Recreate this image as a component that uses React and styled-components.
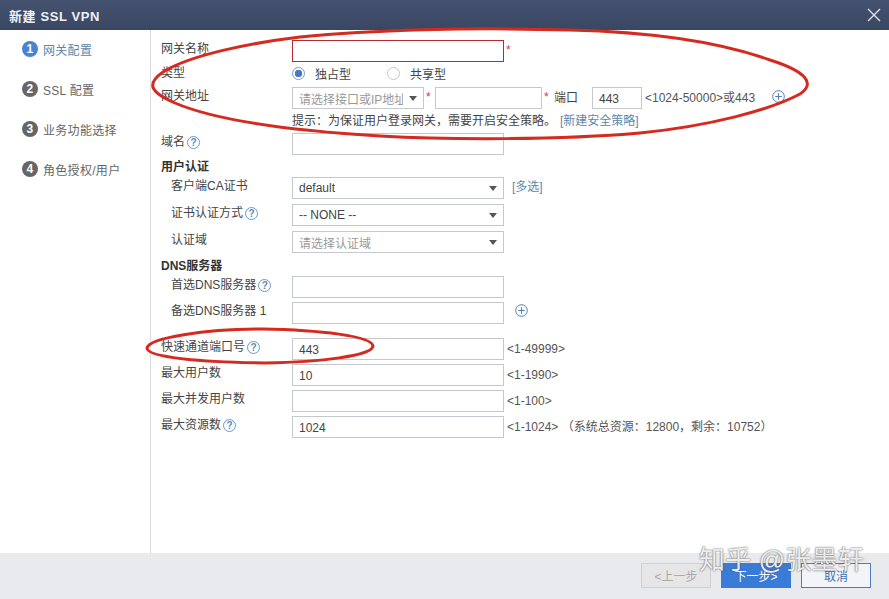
import React from "react";
import styled, { createGlobalStyle } from "styled-components";

const GlobalStyle = createGlobalStyle`
  html, body {
    margin: 0;
    padding: 0;
    background: #fff;
    overflow: hidden;
  }
  body {
    font-family: "Liberation Sans", "Noto Sans CJK SC", sans-serif;
    font-size: 12px;
    color: #444;
  }
`;

const Dialog = styled.div`
  position: relative;
  width: 889px;
  height: 599px;
  display: flex;
  flex-direction: column;
  overflow: hidden;
`;

const TitleBar = styled.header`
  height: 30px;
  flex: none;
  display: flex;
  align-items: center;
  justify-content: space-between;
  padding: 0 8px 0 9px;
  background: linear-gradient(#445270, #3a4763);
  color: #eef0f4;
  font-size: 13px;
  font-weight: bold;
  letter-spacing: 0.6px;
`;

const CloseIcon = styled.svg`
  width: 14px;
  height: 14px;
  display: block;
`;

const Body = styled.div`
  flex: 1;
  display: flex;
  min-height: 0;
`;

const Sidebar = styled.nav`
  width: 128px;
  flex: none;
  border-right: 1px solid #dcdcdc;
  padding-left: 22px;
`;

const Step = styled.div`
  height: 40px;
  box-sizing: border-box;
  padding-bottom: 2px;
  display: flex;
  align-items: center;
  gap: 5px;
  color: ${(p) => (p.$active ? "#5d87a6" : "#666")};
  letter-spacing: 0.3px;
`;

const StepNumber = styled.span`
  width: 16px;
  height: 16px;
  border-radius: 50%;
  background: ${(p) => (p.$active ? "#4a82d4" : "#666")};
  color: #fff;
  font-size: 12px;
  font-weight: bold;
  line-height: 16px;
  text-align: center;
  flex: none;
`;

const Form = styled.main`
  flex: 1;
  display: flex;
  flex-direction: column;
  padding: 10px 0 0 10px;
`;

const Row = styled.div`
  display: flex;
  align-items: flex-start;
  height: 22px;
  margin-top: ${(p) => p.$top || 0}px;
`;

const Label = styled.label`
  width: ${(p) => (p.$indent ? 121 : 131)}px;
  padding-left: ${(p) => (p.$indent ? 10 : 0)}px;
  margin-top: 1px;
  flex: none;
  display: flex;
  align-items: center;
  gap: 2px;
  line-height: 16px;
  color: #444;
  white-space: nowrap;
`;

const CenteredLabel = styled(Label)`
  margin-top: 0;
  line-height: 22px;
`;

const SectionTitle = styled.div`
  height: 22px;
  line-height: 24px;
  font-weight: bold;
  color: #333;
  margin-top: ${(p) => p.$top || 0}px;
`;

const Input = styled.input`
  width: ${(p) => p.$width || 212}px;
  height: 22px;
  box-sizing: border-box;
  flex: none;
  border: 1px solid ${(p) => (p.$error ? "#b32a30" : "#c6c9cc")};
  padding: 1px 6px 0;
  margin: 0;
  background: #fff;
  color: #444;
  font: 12px "Liberation Sans", "Noto Sans CJK SC", sans-serif;
  outline: none;
`;

const SelectBox = styled.div`
  width: ${(p) => p.$width || 212}px;
  height: 22px;
  box-sizing: border-box;
  flex: none;
  border: 1px solid #c6c9cc;
  padding: 0 6px;
  display: flex;
  align-items: center;
  justify-content: space-between;
  color: ${(p) => (p.$placeholder ? "#999" : "#444")};
  overflow: hidden;
  white-space: nowrap;
`;

const SelectText = styled.span`
  overflow: hidden;
  flex: 1;
`;

const Caret = styled.i`
  width: 0;
  height: 0;
  flex: none;
  margin-left: 6px;
  border-left: 4px solid transparent;
  border-right: 4px solid transparent;
  border-top: 5px solid #555;
`;

const Required = styled.span`
  color: #c8434a;
  width: 11px;
  flex: none;
  padding-left: 2px;
  box-sizing: border-box;
  line-height: 20px;
`;

const RadioGroup = styled.div`
  display: flex;
  align-items: center;
  height: 22px;
  gap: 36px;
`;

const RadioItem = styled.span`
  display: flex;
  align-items: center;
  gap: 10px;
  color: #444;
`;

const RadioDot = styled.i`
  width: 13px;
  height: 13px;
  box-sizing: border-box;
  border-radius: 50%;
  border: 1px solid ${(p) => (p.$checked ? "#7d9cc0" : "#c8c8c8")};
  background: ${(p) =>
    p.$checked ? "radial-gradient(circle, #4a78c4 0 3.5px, #fff 4px)" : "#fff"};
`;

const Hint = styled.div`
  line-height: 22px;
  color: #444;
  white-space: nowrap;
`;

const Link = styled.a`
  color: #5d87a6;
  margin-left: ${(p) => p.$left || 0}px;
`;

const Range = styled.span`
  color: #555;
  margin-left: 3px;
  line-height: 22px;
  white-space: nowrap;
`;

const PortLabel = styled.span`
  width: 38px;
  flex: none;
  margin-left: 1px;
  line-height: 22px;
  color: #444;
`;

const Help = styled.span`
  width: 13px;
  height: 13px;
  box-sizing: border-box;
  border-radius: 50%;
  border: 1px solid #6d97c4;
  color: #5d87b8;
  font-size: 10px;
  font-weight: bold;
  line-height: 11px;
  text-align: center;
  flex: none;
`;

const AddIcon = styled.svg`
  width: 13px;
  height: 13px;
  flex: none;
  margin-left: ${(p) => p.$left || 0}px;
  margin-top: ${(p) => p.$offset || 0}px;
`;

const Footer = styled.footer`
  height: 46px;
  flex: none;
  background: #e8eaee;
  display: flex;
  justify-content: flex-end;
  gap: 10px;
  padding: 10px 18px 0 0;
  box-sizing: border-box;
`;

const Button = styled.button`
  width: 70px;
  height: 25px;
  box-sizing: border-box;
  margin: 0;
  padding: 0;
  font: 12px "Liberation Sans", "Noto Sans CJK SC", sans-serif;
  border: 1px solid
    ${(p) =>
      p.$variant === "primary" ? "#3a7bd8" : p.$variant === "ghost" ? "#4a7fc4" : "#cfd0d2"};
  background: ${(p) => (p.$variant === "primary" ? "#3a7bd8" : p.$variant === "ghost" ? "#f2f4f8" : "#e6e6e6")};
  color: ${(p) => (p.$variant === "primary" ? "#fff" : p.$variant === "ghost" ? "#3f6fb4" : "#aaa")};
`;

const Annotations = styled.svg`
  position: absolute;
  left: 0;
  top: 0;
  width: 889px;
  height: 599px;
  pointer-events: none;
`;

const Watermark = styled.div`
  position: absolute;
  left: 699px;
  top: 544px;
  font-size: 26px;
  line-height: 32px;
  letter-spacing: 0.2px;
  white-space: nowrap;
  color: rgba(255, 255, 255, 0.9);
  text-shadow: 0 0 2px rgba(90, 90, 90, 0.85), 0 0 1px rgba(90, 90, 90, 0.7);
`;

const Plus = ({ left, offset }) => (
  <AddIcon viewBox="0 0 13 13" $left={left} $offset={offset}>
    <circle cx="6.5" cy="6.5" r="5.8" fill="none" stroke="#4f80bc" strokeWidth="1" />
    <path d="M6.5 3.2v6.6M3.2 6.5h6.6" stroke="#4f80bc" strokeWidth="1" />
  </AddIcon>
);

const steps = ["网关配置", "SSL 配置", "业务功能选择", "角色授权/用户"];

export default function App() {
  return (
    <Dialog>
      <GlobalStyle />
      <TitleBar>
        新建 SSL VPN
        <CloseIcon viewBox="0 0 14 14">
          <path d="M1 1l12 12M13 1L1 13" stroke="#dfe2e8" strokeWidth="1.4" fill="none" />
        </CloseIcon>
      </TitleBar>

      <Body>
        <Sidebar>
          {steps.map((s, i) => (
            <Step key={s} $active={i === 0}>
              <StepNumber $active={i === 0}>{i + 1}</StepNumber>
              {s}
            </Step>
          ))}
        </Sidebar>

        <Form>
          <Row>
            <Label>网关名称</Label>
            <Input $error />
            <Required>*</Required>
          </Row>
          <Row>
            <CenteredLabel>类型</CenteredLabel>
            <RadioGroup>
              <RadioItem>
                <RadioDot $checked />
                独占型
              </RadioItem>
              <RadioItem>
                <RadioDot />
                共享型
              </RadioItem>
            </RadioGroup>
          </Row>
          <Row $top={3}>
            <Label>网关地址</Label>
            <SelectBox $width={132} $placeholder>
              <SelectText>请选择接口或IP地址</SelectText>
              <Caret />
            </SelectBox>
            <Required>*</Required>
            <Input $width={107} />
            <Required>*</Required>
            <PortLabel>端口</PortLabel>
            <Input $width={50} defaultValue="443" />
            <Range>&lt;1024-50000&gt;或443</Range>
            <Plus left={17} offset={3} />
          </Row>
          <Row $top={1}>
            <Label />
            <Hint>
              提示：为保证用户登录网关，需要开启安全策略。
              <Link $left={4}>[新建安全策略]</Link>
            </Hint>
          </Row>
          <Row $top={1}>
            <Label>
              域名
              <Help>?</Help>
            </Label>
            <Input />
          </Row>

          <SectionTitle>用户认证</SectionTitle>
          <Row>
            <Label $indent>客户端CA证书</Label>
            <SelectBox>
              <SelectText>default</SelectText>
              <Caret />
            </SelectBox>
            <Link $left={8}>[多选]</Link>
          </Row>
          <Row $top={5}>
            <Label $indent>
              证书认证方式
              <Help>?</Help>
            </Label>
            <SelectBox>
              <SelectText>-- NONE --</SelectText>
              <Caret />
            </SelectBox>
          </Row>
          <Row $top={5}>
            <Label $indent>认证域</Label>
            <SelectBox $placeholder>
              <SelectText>请选择认证域</SelectText>
              <Caret />
            </SelectBox>
          </Row>

          <SectionTitle $top={1}>DNS服务器</SectionTitle>
          <Row>
            <Label $indent>
              首选DNS服务器
              <Help>?</Help>
            </Label>
            <Input />
          </Row>
          <Row $top={4}>
            <Label $indent>备选DNS服务器 1</Label>
            <Input />
            <Plus left={11} offset={2} />
          </Row>

          <Row $top={14}>
            <Label>
              快速通道端口号
              <Help>?</Help>
            </Label>
            <Input defaultValue="443" />
            <Range>&lt;1-49999&gt;</Range>
          </Row>
          <Row $top={4}>
            <Label>最大用户数</Label>
            <Input defaultValue="10" />
            <Range>&lt;1-1990&gt;</Range>
          </Row>
          <Row $top={4}>
            <Label>最大并发用户数</Label>
            <Input />
            <Range>&lt;1-100&gt;</Range>
          </Row>
          <Row $top={4}>
            <Label>
              最大资源数
              <Help>?</Help>
            </Label>
            <Input defaultValue="1024" />
            <Range>&lt;1-1024&gt; （系统总资源：12800，剩余：10752）</Range>
          </Row>
        </Form>
      </Body>

      <Footer>
        <Button>&lt;上一步</Button>
        <Button $variant="primary">下一步&gt;</Button>
        <Button $variant="ghost">取消</Button>
      </Footer>

      {/* red marks drawn over the screenshot */}
      <Annotations viewBox="0 0 889 599">
        <path
          d="M300 37 C250 43 190 55 163 72 C146 84 150 92 175 103 C210 118 280 130 380 136 C450 140 560 140 640 133 C710 126 770 110 800 94 C815 84 808 72 770 60 C720 42 650 32 570 30 C470 27 370 30 300 37 Z"
          fill="none"
          stroke="#d52a20"
          strokeWidth="3"
        />
        <path
          d="M147 348 C149 338 205 329 262 329 C320 330 372 336 373 346 C372 356 320 362 265 363 C205 362 147 358 147 348 Z"
          fill="none"
          stroke="#d52a20"
          strokeWidth="3"
        />
      </Annotations>
      <Watermark>知乎 @张墨轩</Watermark>
    </Dialog>
  );
}
